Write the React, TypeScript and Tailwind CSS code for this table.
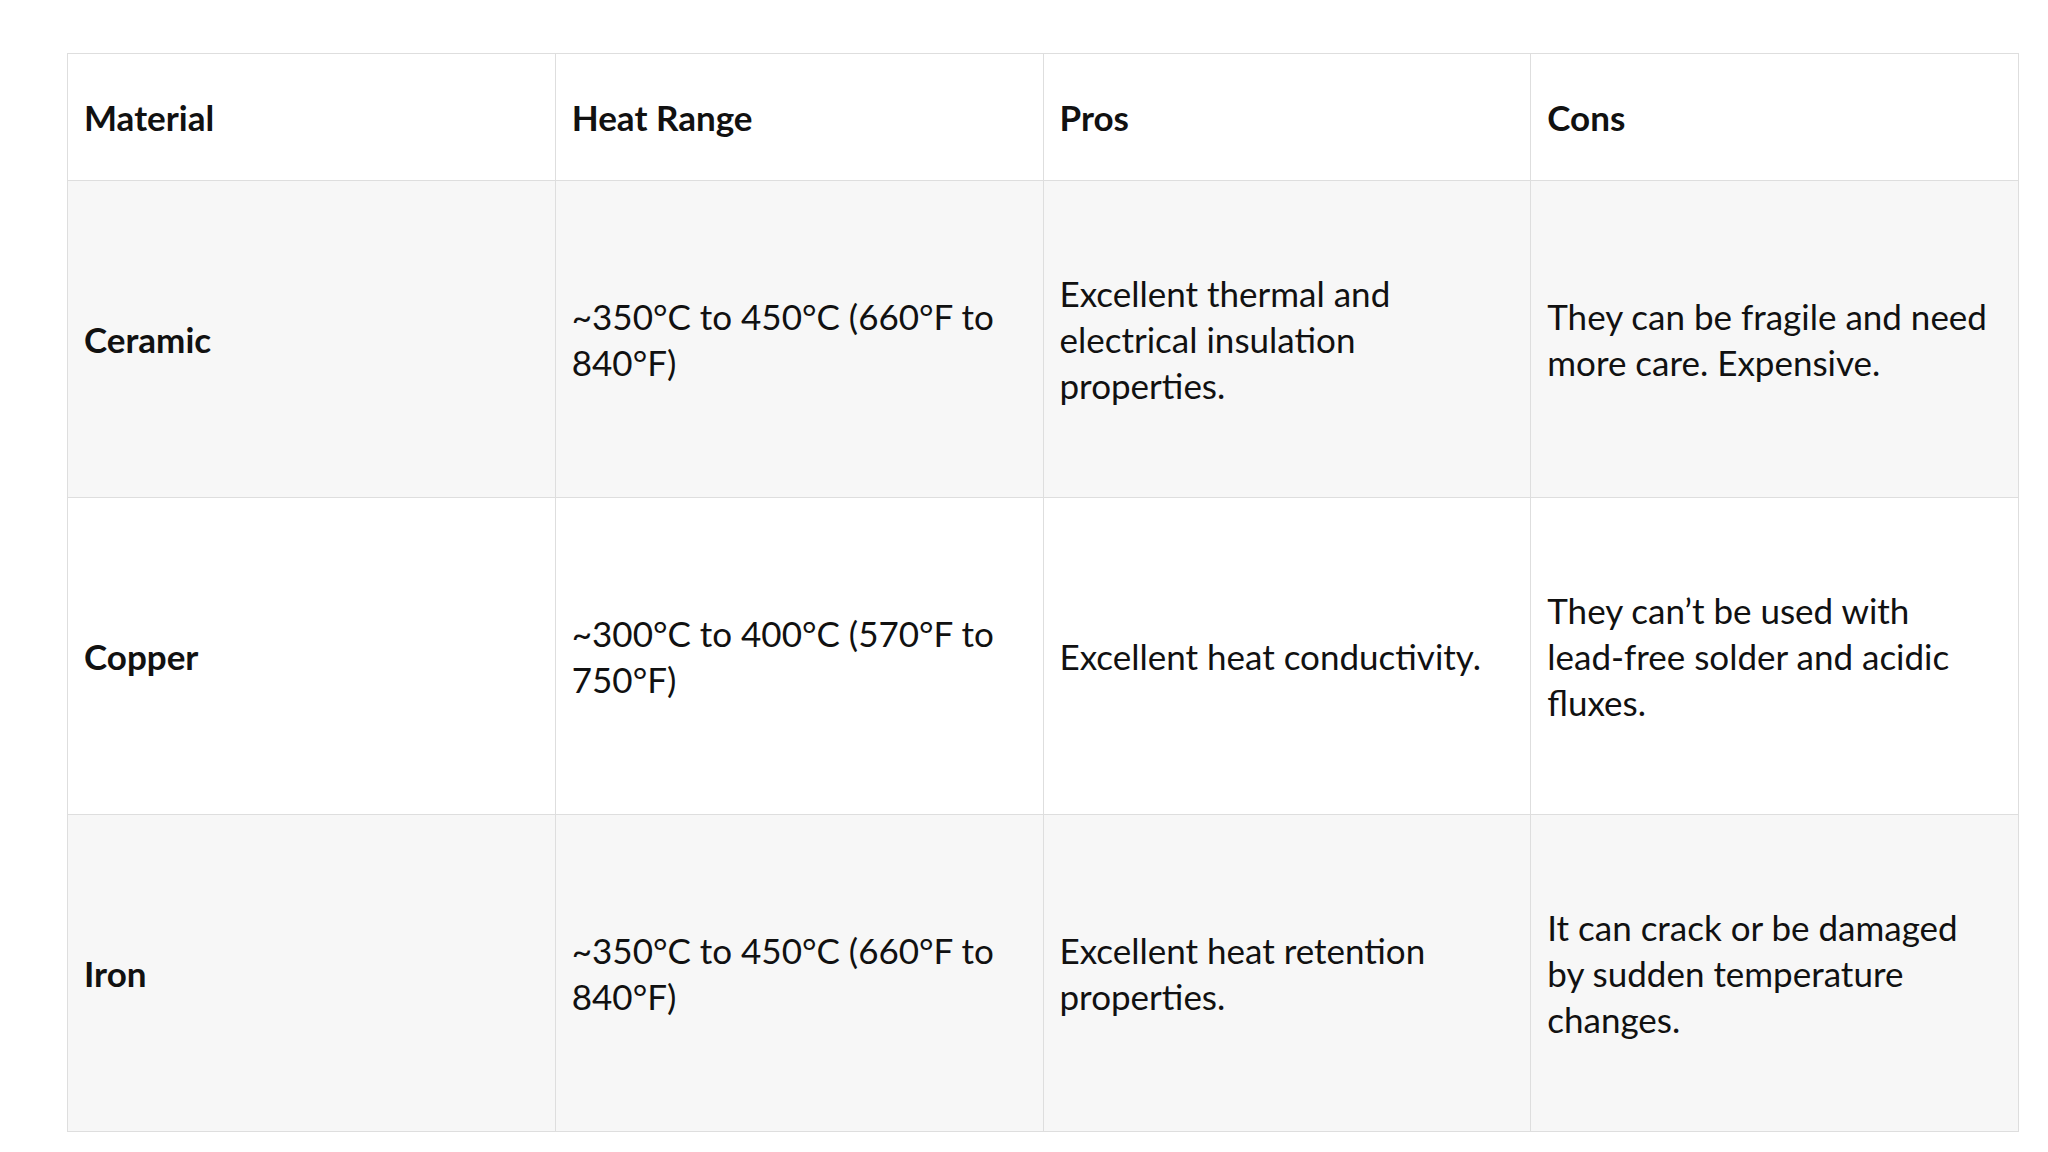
const HEADERS = ['Material', 'Heat Range', 'Pros', 'Cons'];

// lines are broken where the reference breaks them
const ROWS = [
  {
    material: 'Ceramic',
    range: ['~350°C to 450°C (660°F to', '840°F)'],
    pros: ['Excellent thermal and', 'electrical insulation', 'properties.'],
    cons: ['They can be fragile and need', 'more care. Expensive.'],
  },
  {
    material: 'Copper',
    range: ['~300°C to 400°C (570°F to', '750°F)'],
    pros: ['Excellent heat conductivity.'],
    cons: ['They can’t be used with', 'lead-free solder and acidic', 'fluxes.'],
  },
  {
    material: 'Iron',
    range: ['~350°C to 450°C (660°F to', '840°F)'],
    pros: ['Excellent heat retention', 'properties.'],
    cons: ['It can crack or be damaged', 'by sudden temperature', 'changes.'],
  },
];

const cell = 'border border-[#dedede] px-4 align-middle text-left';

function Lines({ lines }: { lines: string[] }) {
  return (
    <>
      {lines.map((l) => (
        <div key={l} className="whitespace-nowrap">
          {l}
        </div>
      ))}
    </>
  );
}

export default function App() {
  return (
    <div className="min-h-[1152px] w-[2048px] bg-white pl-[67px] pt-[53px] font-['Lato','Liberation_Sans',sans-serif] text-[35px] leading-[46px] text-[#111]">
      <table className="w-[1952px] table-fixed border-collapse">
        <thead>
          <tr className="h-[127px] bg-white">
            {HEADERS.map((h) => (
              <th key={h} className={`${cell} font-bold`}>
                {h}
              </th>
            ))}
          </tr>
        </thead>
        <tbody>
          {ROWS.map((r, i) => (
            <tr
              key={r.material}
              className={`h-[317px] ${i % 2 === 0 ? 'bg-[#f7f7f7]' : 'bg-white'}`}
            >
              <td className={`${cell} font-bold`}>{r.material}</td>
              <td className={cell}>
                <Lines lines={r.range} />
              </td>
              <td className={cell}>
                <Lines lines={r.pros} />
              </td>
              <td className={cell}>
                <Lines lines={r.cons} />
              </td>
            </tr>
          ))}
        </tbody>
      </table>
    </div>
  );
}
